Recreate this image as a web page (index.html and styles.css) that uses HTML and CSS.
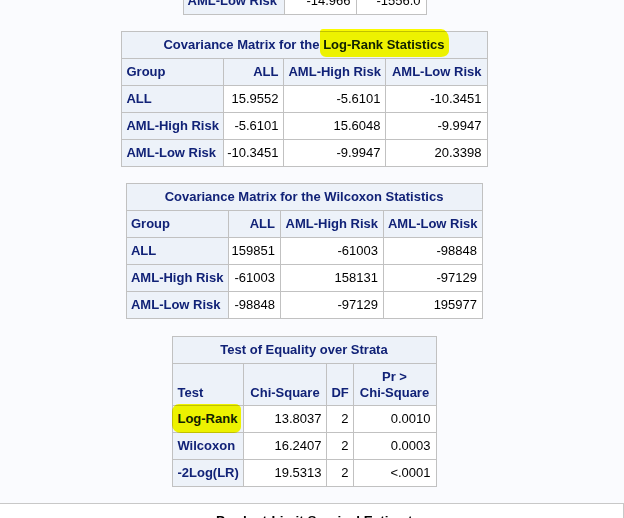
FILE: index.html
```html
<!DOCTYPE html>
<html lang="en">
<head>
<meta charset="utf-8">
<title>LIFETEST output</title>
<link rel="stylesheet" href="styles.css">
</head>
<body>
<div class="page">
  <table class="tbl t0">
    <colgroup><col class="t0c1"><col class="t0c2"><col class="t0c3"></colgroup>
    <tbody>
      <tr><th class="rh">AML-Low Risk</th><td>-14.966</td><td>-1556.0</td></tr>
    </tbody>
  </table>

  <table class="tbl t1">
    <colgroup><col class="t1c1"><col class="t1c2"><col class="t1c3"><col class="t1c4"></colgroup>
    <thead>
      <tr><th class="title" colspan="4">Covariance Matrix for the <span class="mark">Log-Rank Statistics</span></th></tr>
      <tr><th class="rh">Group</th><th class="ch">ALL</th><th class="ch">AML-High Risk</th><th class="ch">AML-Low Risk</th></tr>
    </thead>
    <tbody>
      <tr><th class="rh">ALL</th><td>15.9552</td><td>-5.6101</td><td>-10.3451</td></tr>
      <tr><th class="rh">AML-High Risk</th><td>-5.6101</td><td>15.6048</td><td>-9.9947</td></tr>
      <tr><th class="rh">AML-Low Risk</th><td>-10.3451</td><td>-9.9947</td><td>20.3398</td></tr>
    </tbody>
  </table>

  <table class="tbl t2">
    <colgroup><col class="t2c1"><col class="t2c2"><col class="t2c3"><col class="t2c4"></colgroup>
    <thead>
      <tr><th class="title" colspan="4">Covariance Matrix for the Wilcoxon Statistics</th></tr>
      <tr><th class="rh">Group</th><th class="ch">ALL</th><th class="ch">AML-High Risk</th><th class="ch">AML-Low Risk</th></tr>
    </thead>
    <tbody>
      <tr><th class="rh">ALL</th><td>159851</td><td>-61003</td><td>-98848</td></tr>
      <tr><th class="rh">AML-High Risk</th><td>-61003</td><td>158131</td><td>-97129</td></tr>
      <tr><th class="rh">AML-Low Risk</th><td>-98848</td><td>-97129</td><td>195977</td></tr>
    </tbody>
  </table>

  <table class="tbl t3">
    <colgroup><col class="t3c1"><col class="t3c2"><col class="t3c3"><col class="t3c4"></colgroup>
    <thead>
      <tr><th class="title" colspan="4">Test of Equality over Strata</th></tr>
      <tr class="two"><th class="rh">Test</th><th class="cc">Chi-Square</th><th class="cc">DF</th><th class="cc">Pr &gt;<br>Chi-Square</th></tr>
    </thead>
    <tbody>
      <tr><th class="rh hlcell"><span class="blob"></span>Log-Rank</th><td>13.8037</td><td>2</td><td>0.0010</td></tr>
      <tr><th class="rh">Wilcoxon</th><td>16.2407</td><td>2</td><td>0.0003</td></tr>
      <tr><th class="rh">-2Log(LR)</th><td>19.5313</td><td>2</td><td>&lt;.0001</td></tr>
    </tbody>
  </table>
</div>
<div class="graph">
  <p class="gtitle">Product-Limit Survival Estimates</p>
</div>
</body>
</html>
```

FILE: styles.css
```css
html, body {
  margin: 0;
  padding: 0;
  overflow: hidden;
  background: #FAFBFE;
}

body {
  font-family: "Liberation Sans", Arial, sans-serif;
  font-size: 13px;
  line-height: 16px;
  color: #000;
}

.page {
  width: 609px;
}

.tbl {
  border-collapse: separate;
  border-spacing: 0;
  table-layout: fixed;
  margin: 16px auto 0;
  border-left: 1px solid #C1C1C1;
  border-top: 1px solid #C1C1C1;
}

.tbl th,
.tbl td {
  border-right: 1px solid #C1C1C1;
  border-bottom: 1px solid #C1C1C1;
  white-space: nowrap;
  vertical-align: middle;
}

.tbl th {
  background: #EDF2F9;
  color: #112277;
  font-weight: bold;
  padding: 5px 5px 5px 4px;
}

.tbl td {
  background: #FFFFFF;
  color: #000;
  text-align: right;
  padding: 5px 5px 5px 2px;
}

.tbl .title { text-align: center; }
.tbl .rh { text-align: left; }
.tbl .ch { text-align: right; }
.tbl .cc { text-align: center; }

.two th {
  vertical-align: bottom;
  padding-bottom: 4px;
}

/* table widths (table border included) */
.t0 { width: 244px; margin-top: -13px; }
.t0c1 { width: 101px; }
.t0c2 { width: 72px; }
.t0c3 { width: 70px; }

.t1 { width: 366px; }
.t1c1 { width: 102px; }
.t1c2 { width: 60px; }
.t1c3 { width: 102px; }
.t1c4 { width: 101px; }

.t2 { width: 357px; }
.t2c1 { width: 102px; }
.t2c2 { width: 52px; }
.t2c3 { width: 103px; }
.t2c4 { width: 99px; }

.t3 { width: 264px; margin-top: 17px; }
.t3c1 { width: 71px; }
.t3c2 { width: 83px; }
.t3c3 { width: 27px; }
.t3c4 { width: 82px; }

/* yellow marker highlights */
.mark {
  position: relative;
}

.mark::before {
  content: "";
  position: absolute;
  left: -3px;
  right: -4px;
  top: -8px;
  bottom: -5px;
  background: #FFFF00;
  mix-blend-mode: multiply;
  border-radius: 3px 8px 8px 6px / 3px 10px 6px 6px;
}

.hlcell {
  position: relative;
}

.blob {
  position: absolute;
  left: -1px;
  right: 2px;
  top: -2px;
  bottom: -1px;
  background: #FFFF00;
  mix-blend-mode: multiply;
  border-radius: 7px 6px 7px 9px / 8px 5px 6px 8px;
}

/* graph panel below */
.graph {
  margin: 16px 0 0 -1px;
  width: 625px;
  height: 60px;
  box-sizing: border-box;
  background: #FFFFFF;
  border: 1px solid #C8C8C8;
  padding: 9px 0 0 216px;
}

.gtitle {
  margin: 0;
  font-family: "Liberation Sans", Arial, sans-serif;
  font-size: 13.5px;
  line-height: 16px;
  font-weight: bold;
  color: #000;
}
```
